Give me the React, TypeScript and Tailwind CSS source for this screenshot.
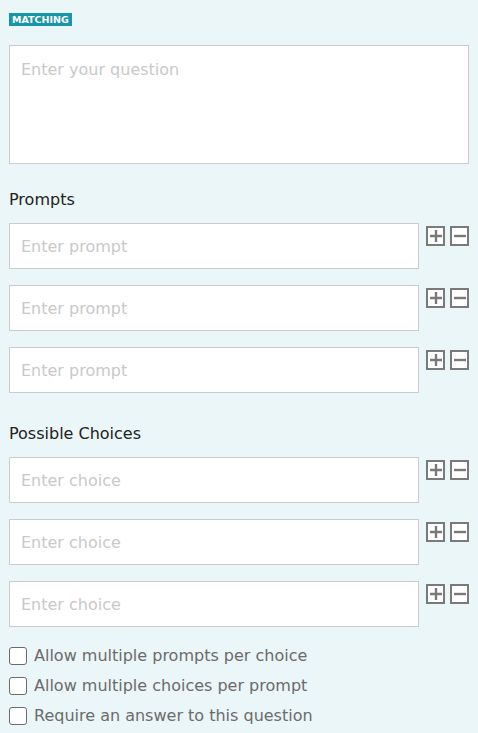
import { useState } from 'react'

const font = { fontFamily: '"DejaVu Sans", "Noto Sans", sans-serif' }

function RowButtons() {
  return (
    <div className="flex shrink-0 gap-[5px] pt-[3px]">
      <button className="w-[19px] h-[20px] border-2 border-[#7a7a7a] bg-white flex items-center justify-center">
        <svg width="12" height="12" viewBox="0 0 12 12">
          <path d="M6 0v12M0 6h12" stroke="#7a7a7a" strokeWidth="2.4" />
        </svg>
      </button>
      <button className="w-[19px] h-[20px] border-2 border-[#7a7a7a] bg-white flex items-center justify-center">
        <svg width="12" height="12" viewBox="0 0 12 12">
          <path d="M0 6h12" stroke="#7a7a7a" strokeWidth="2.4" />
        </svg>
      </button>
    </div>
  )
}

function EntryRow({ placeholder }: { placeholder: string }) {
  return (
    <div className="flex gap-[7px]">
      <input
        className="shrink-0 w-[410px] h-[46px] border border-[#cccccc] bg-white px-[11px] text-[16px] text-[#333] placeholder:text-[#c9c9c9] outline-none"
        style={font}
        placeholder={placeholder}
      />
      <RowButtons />
    </div>
  )
}

function Check({ label }: { label: string }) {
  const [on, setOn] = useState(false)
  return (
    <label className="flex items-center gap-[7px] h-[30px] cursor-pointer">
      <input
        type="checkbox"
        checked={on}
        onChange={() => setOn(!on)}
        className="appearance-none shrink-0 w-[18px] h-[18px] border-[1.5px] border-[#6b6b6b] rounded-[3px] bg-white"
      />
      <span className="text-[16px] text-[#6b6b6b]">{label}</span>
    </label>
  )
}

export default function App() {
  return (
    <div className="min-h-screen bg-[#ebf6f8] px-[9px] pt-[13px]" style={font}>
      <div className="w-fit bg-[#1795a9] text-white text-[9.5px] font-bold leading-[13px] px-[3px]">
        MATCHING
      </div>

      <textarea
        className="block mt-[19px] w-[460px] h-[119px] border border-[#cccccc] bg-white px-[11px] py-[12px] text-[16px] text-[#333] placeholder:text-[#c9c9c9] outline-none resize-none"
        style={font}
        placeholder="Enter your question"
      />

      <div className="mt-[26px] text-[16px] text-[#222] leading-[20px]">Prompts</div>
      <div className="mt-[13px] flex flex-col gap-[16px]">
        <EntryRow placeholder="Enter prompt" />
        <EntryRow placeholder="Enter prompt" />
        <EntryRow placeholder="Enter prompt" />
      </div>

      <div className="mt-[31px] text-[16px] text-[#222] leading-[20px]">Possible Choices</div>
      <div className="mt-[13px] flex flex-col gap-[16px]">
        <EntryRow placeholder="Enter choice" />
        <EntryRow placeholder="Enter choice" />
        <EntryRow placeholder="Enter choice" />
      </div>

      <div className="mt-[14px] flex flex-col">
        <Check label="Allow multiple prompts per choice" />
        <Check label="Allow multiple choices per prompt" />
        <Check label="Require an answer to this question" />
      </div>
    </div>
  )
}
